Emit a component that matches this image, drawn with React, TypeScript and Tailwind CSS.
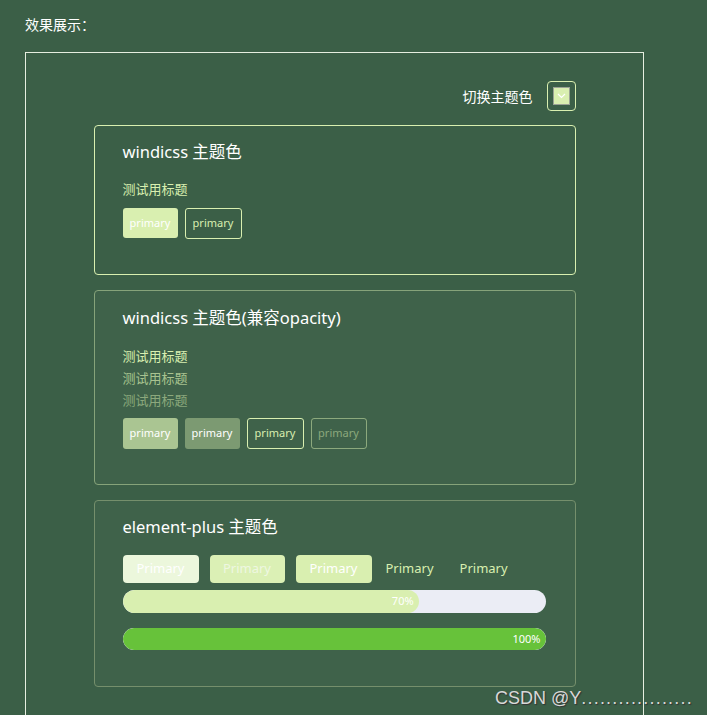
import React from "react";

const FONT = { fontFamily: '"Noto Sans", "Noto Sans CJK SC", sans-serif' };

function Chevron() {
  return (
    <svg width="9" height="6" viewBox="0 0 9 6" fill="none">
      <path d="M1 1l3.5 3.5L8 1" stroke="#fff" strokeWidth="1.2" />
    </svg>
  );
}

export default function App() {
  return (
    <div className="relative min-h-[715px] bg-[#3b5f47] pl-[25px] pt-[15px] text-white" style={FONT}>
      <div className="h-[20px] text-[14px] leading-[20px]">效果展示：</div>

      {/* 外框 */}
      <div className="mt-[17px] w-[619px] border border-[#e6eee0] pb-[40px] pt-[28px]">
        <div className="mx-auto w-[482px]">
          {/* 切换主题色 */}
          <div className="flex items-center justify-end">
            <span className="text-[14px]">切换主题色</span>
            <div className="ml-[14px] flex h-[30px] w-[29px] items-center justify-center rounded-[4px] border border-[#d9efb0]">
              <div className="flex h-[18px] w-[17px] items-center justify-center border border-[#9aa294] bg-[#d9efb0]">
                <Chevron />
              </div>
            </div>
          </div>

          {/* windicss 主题色 */}
          <div className="mt-[14px] h-[150px] rounded-[4px] border border-[#d9efb0] pl-[28px] pt-[14px]">
            <div className="text-[16.5px] leading-[24px]">windicss 主题色</div>
            <div className="mt-[15px] text-[13px] leading-[20px] text-[#d9efb0]">测试用标题</div>
            <div className="mt-[9px] flex gap-[7px]">
              <div className="flex h-[30px] w-[55px] items-center justify-center rounded-[3px] bg-[#d9efb0] text-[11px]">primary</div>
              <div className="flex h-[31px] w-[57px] items-center justify-center rounded-[3px] border border-[#d9efb0] text-[11px] text-[#d9efb0]">primary</div>
            </div>
          </div>

          {/* windicss 主题色(兼容opacity) */}
          <div className="mt-[15px] h-[195px] rounded-[4px] border border-[#86a37a] bg-[#3f624a] pl-[28px] pt-[15px]">
            <div className="text-[16.5px] leading-[24px]">windicss 主题色(兼容opacity)</div>
            <div className="mt-[15px] text-[13px] leading-[22px]">
              <div className="text-[#d9efb0]">测试用标题</div>
              <div className="text-[#d9efb0]/70">测试用标题</div>
              <div className="text-[#d9efb0]/50">测试用标题</div>
            </div>
            <div className="mt-[7px] flex gap-[7px]">
              <div className="flex h-[31px] w-[55px] items-center justify-center rounded-[3px] bg-[#d9efb0]/70 text-[11px]">primary</div>
              <div className="flex h-[31px] w-[55px] items-center justify-center rounded-[3px] bg-[#d9efb0]/40 text-[11px]">primary</div>
              <div className="flex h-[31px] w-[57px] items-center justify-center rounded-[3px] border border-[#d9efb0] text-[11px] text-[#d9efb0]">primary</div>
              <div className="flex h-[31px] w-[56px] items-center justify-center rounded-[3px] border border-[#d9efb0]/50 text-[11px] text-[#d9efb0]/50">primary</div>
            </div>
          </div>

          {/* element-plus 主题色 */}
          <div className="mt-[15px] h-[187px] rounded-[4px] border border-[#758f6c] bg-[#3f624a] pl-[28px] pr-[29px] pt-[14px]">
            <div className="text-[16.5px] leading-[24px]">element-plus 主题色</div>
            <div className="mt-[16px] flex items-center text-[13px]">
              <div className="flex h-[28px] w-[76px] items-center justify-center rounded-[4px] bg-[#ecf7dc]">Primary</div>
              <div className="ml-[11px] flex h-[28px] w-[75px] items-center justify-center rounded-[4px] bg-[#dbf0b5] text-[#eef7e1]">Primary</div>
              <div className="ml-[11px] flex h-[28px] w-[76px] items-center justify-center rounded-[4px] bg-[#d9efb0]">Primary</div>
              <div className="ml-[14px] text-[#d9efb0]">Primary</div>
              <div className="ml-[26px] text-[#d9efb0]">Primary</div>
            </div>
            <div className="mt-[7px] h-[23px] overflow-hidden rounded-full bg-[#ebedf5]">
              <div className="flex h-full items-center justify-end rounded-full bg-[#d9efb0] pr-[5px] text-[11px]" style={{ width: "70%" }}>
                70%
              </div>
            </div>
            <div className="mt-[15px] h-[22px] overflow-hidden rounded-full bg-[#ebedf5]">
              <div className="flex h-full items-center justify-end rounded-full bg-[#67c23a] pr-[5px] text-[11px]" style={{ width: "100%" }}>
                100%
              </div>
            </div>
          </div>
        </div>
      </div>

      {/* 水印 */}
      <div
        className="absolute left-[495px] top-[685px] text-[18px] text-[#d8d8d8]"
        style={{ fontFamily: '"Liberation Sans", sans-serif', textShadow: "1px 1px 1px #333" }}
      >
        CSDN @Y<span className="tracking-[1.2px]">..................</span>
      </div>
    </div>
  );
}
